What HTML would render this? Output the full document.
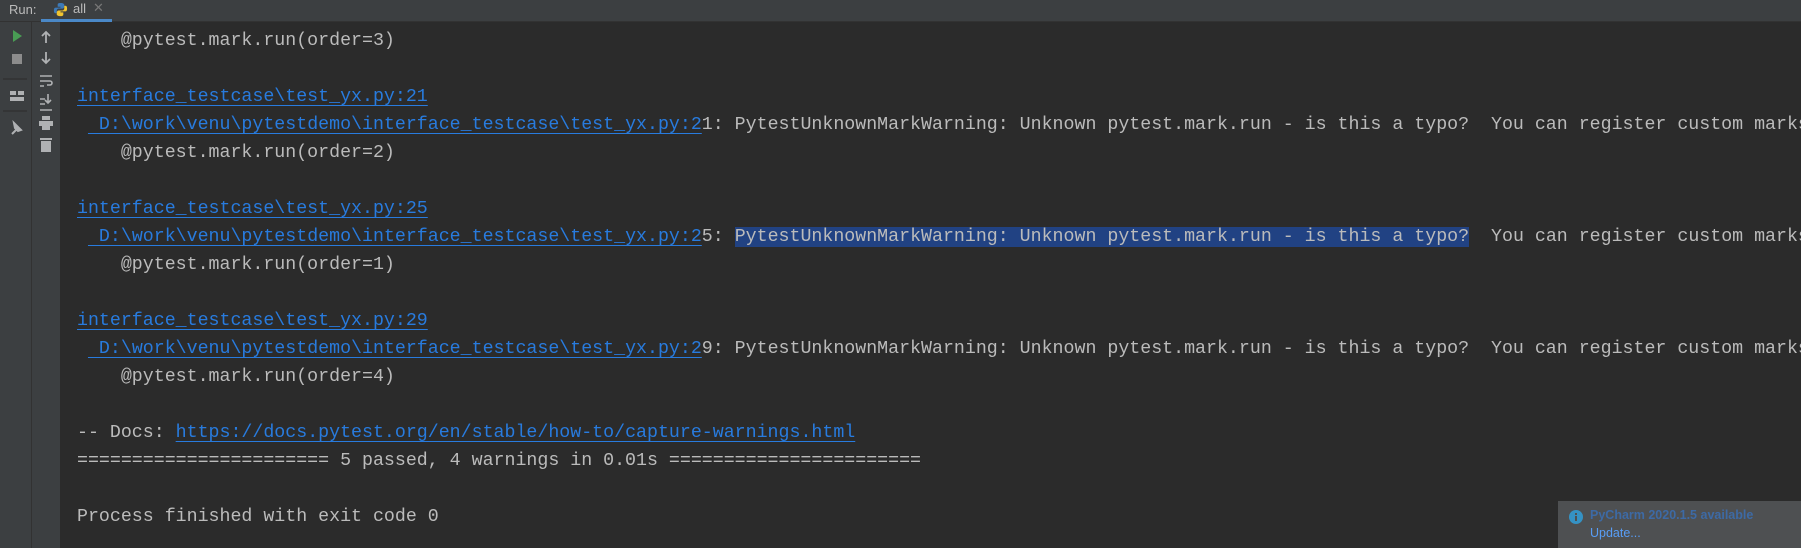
<!DOCTYPE html>
<html><head><style>
body{margin:0;width:1801px;height:548px;background:#2b2b2b;overflow:hidden;position:relative;font-family:"Liberation Sans",sans-serif}
.top{position:absolute;left:0;top:0;width:1801px;height:21px;background:#3c3f41;border-bottom:1px solid #323232}
.tb{position:absolute;top:22px;height:526px;background:#3c3f41}
.ln{position:absolute;left:77px;font-family:"Liberation Mono",monospace;font-size:18.28px;color:#bbbbbb;white-space:pre;line-height:28px;height:28px}
a{color:#287bde;text-decoration:underline;text-underline-offset:4px;text-decoration-thickness:1px}
.hl{background:#214283}
</style></head><body>
<div class="top">
<span style="position:absolute;left:9px;top:2px;font-size:13px;color:#bbbbbb">Run:</span>
<svg style="position:absolute;left:53px;top:2px" width="15" height="15" viewBox="0 0 16 16"><path d="M8 1c-3 0-3 1-3 2v2h3v1H3c-2 0-2 2-2 3s0 3 2 3h1V9c0-1 1-2 2-2h4c1 0 2-1 2-2V3c0-1-1-2-4-2z" fill="#3d7ab8"/><path d="M8 15c3 0 3-1 3-2v-2H8v-1h5c2 0 2-2 2-3s0-3-2-3h-1v3c0 1-1 2-2 2H6c-1 0-2 1-2 2v2c0 1 1 2 4 2z" fill="#f0c430"/></svg>
<span style="position:absolute;left:73px;top:1px;font-size:13px;color:#bbbbbb">all</span>
<span style="position:absolute;left:93px;top:0px;font-size:13px;color:#777">✕</span>
<div style="position:absolute;left:41px;top:19px;width:71px;height:3px;background:#4a88c7"></div>
</div>
<div class="tb" style="left:0;width:31px;border-right:1px solid #323232"></div>
<div class="tb" style="left:32px;width:28px"></div>
<svg style="position:absolute;left:0;top:22px" width="60" height="160">
<path d="M13 8l9 6-9 6z" fill="#499c54"/>
<rect x="12" y="32" width="10" height="10" fill="#8c8c8c"/>
<line x1="3" y1="57" x2="27" y2="57" stroke="#2b2b2b"/>
<rect x="10" y="69" width="6" height="4" fill="#afb1b3"/><rect x="18" y="69" width="6" height="4" fill="#afb1b3"/><rect x="10" y="75" width="14" height="4" fill="#afb1b3"/>
<line x1="3" y1="89" x2="27" y2="89" stroke="#2b2b2b"/>
<path d="M12 112l5-5M14 101l7 7-3 1-3-3z" stroke="#afb1b3" stroke-width="2" fill="#afb1b3"/>
<path d="M46 10v11M42 14l4-4 4 4" stroke="#afb1b3" stroke-width="1.8" fill="none"/>
<path d="M46 30v11M42 37l4 4 4-4" stroke="#afb1b3" stroke-width="1.8" fill="none"/>
<path d="M40 54h12M40 59h10a2 2 0 0 1 0 4h-3M40 64h4" stroke="#afb1b3" stroke-width="1.6" fill="none"/>
<path d="M40 77h5M40 82h5M40 88h12M48 72v9M45 78l3 3 3-3" stroke="#afb1b3" stroke-width="1.6" fill="none"/>
<rect x="42" y="94" width="8" height="4" fill="#afb1b3"/><rect x="39" y="99" width="14" height="5" fill="#afb1b3"/><rect x="42" y="104" width="8" height="4" fill="#afb1b3"/>
<rect x="40" y="116" width="12" height="2" fill="#afb1b3"/><rect x="41" y="119" width="10" height="11" fill="#afb1b3"/>
</svg>
<div class="ln" style="top:27px">    @pytest.mark.run(order=3)</div>
<div class="ln" style="top:83px"><a>interface_testcase\test_yx.py:21</a></div>
<div class="ln" style="top:111px"> <a> D:\work\venu\pytestdemo\interface_testcase\test_yx.py:2</a>1: PytestUnknownMarkWarning: Unknown pytest.mark.run - is this a typo?  You can register custom marks</div>
<div class="ln" style="top:139px">    @pytest.mark.run(order=2)</div>
<div class="ln" style="top:195px"><a>interface_testcase\test_yx.py:25</a></div>
<div class="ln" style="top:223px"> <a> D:\work\venu\pytestdemo\interface_testcase\test_yx.py:2</a>5: <span class="hl">PytestUnknownMarkWarning: Unknown pytest.mark.run - is this a typo?</span>  You can register custom marks</div>
<div class="ln" style="top:251px">    @pytest.mark.run(order=1)</div>
<div class="ln" style="top:307px"><a>interface_testcase\test_yx.py:29</a></div>
<div class="ln" style="top:335px"> <a> D:\work\venu\pytestdemo\interface_testcase\test_yx.py:2</a>9: PytestUnknownMarkWarning: Unknown pytest.mark.run - is this a typo?  You can register custom marks</div>
<div class="ln" style="top:363px">    @pytest.mark.run(order=4)</div>
<div class="ln" style="top:419px">-- Docs: <a>https://docs.pytest.org/en/stable/how-to/capture-warnings.html</a></div>
<div class="ln" style="top:447px">======================= 5 passed, 4 warnings in 0.01s =======================</div>
<div class="ln" style="top:503px">Process finished with exit code 0</div>
<div style="position:absolute;left:1558px;top:501px;width:243px;height:47px;background:#4e5052">
<svg style="position:absolute;left:11px;top:9px" width="14" height="14"><circle cx="7" cy="7" r="7" fill="#3592c4"/><rect x="6" y="6" width="2" height="5" fill="#4e5052"/><rect x="6" y="3" width="2" height="2" fill="#4e5052"/></svg>
<div style="position:absolute;left:32px;top:7px;font-size:12.5px;font-weight:bold;color:#3d6aa5">PyCharm 2020.1.5 available</div>
<div style="position:absolute;left:32px;top:25px;font-size:12.5px;color:#589df6">Update...</div>
</div>
</body></html>
